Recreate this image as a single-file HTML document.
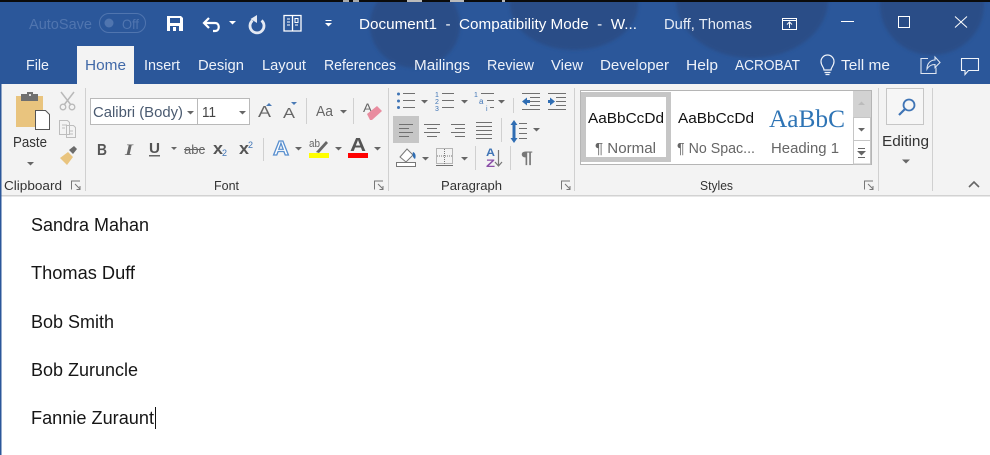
<!DOCTYPE html>
<html lang="en"><head><meta charset="utf-8"><title>Document1 - Word</title>
<style>
html,body{margin:0;padding:0;width:990px;height:455px;overflow:hidden;background:#fff}
svg{display:block}
text{font-family:"Liberation Sans",sans-serif}
.t{font-size:15px;fill:#fff}
.tab{font-size:15px;fill:#eef2f9}
.lab{font-size:13px;fill:#333}
.doc{font-size:18.500px;fill:#161616}
.ar{fill:#666}
.ln{stroke:#707070;stroke-width:1;fill:none}
.sep{stroke:#d0d0d0;stroke-width:1}
.lau{stroke:#777;stroke-width:1;fill:none}
.w{stroke:#fff;fill:none;stroke-width:1.2}
</style></head><body>
<svg width="990" height="455" viewBox="0 0 990 455" xmlns="http://www.w3.org/2000/svg">
<defs><filter id="b" x="-10%" y="-10%" width="120%" height="120%"><feGaussianBlur stdDeviation="1.500"/></filter></defs>
<rect width="990" height="455" fill="#fff"/>
<!-- title bar -->
<rect width="990" height="85" fill="#2b579a"/>
<g fill="#294d87" filter="url(#b)">
<ellipse cx="415" cy="25" rx="45" ry="43"/>
<ellipse cx="574" cy="5" rx="64" ry="45"/>
<ellipse cx="752" cy="0" rx="76" ry="58"/>
<ellipse cx="932" cy="5" rx="52" ry="50"/>
</g>
<rect width="990" height="2" fill="#0b0b0b"/>
<rect x="343" y="0" width="6" height="2" fill="#aaa"/><rect x="353" y="0" width="6" height="2" fill="#aaa"/>
<rect x="407" y="0" width="15" height="2" fill="#bbb"/><rect x="450" y="0" width="14" height="2" fill="#bbb"/><rect x="502" y="0" width="3" height="2" fill="#bbb"/>
<text x="29" y="29" class="t" style="fill:#5075af" textLength="63" lengthAdjust="spacingAndGlyphs">AutoSave</text>
<rect x="99.500" y="13.500" width="46" height="19" rx="9.500" fill="none" stroke="#5075af"/>
<circle cx="109" cy="23" r="4.500" fill="#5075af"/>
<text x="122" y="29" class="t" style="fill:#5075af;font-size:14px" textLength="17" lengthAdjust="spacingAndGlyphs">Off</text>
<!-- save -->
<path d="M167 16h14l2 2v13h-16z" fill="#fff"/><rect x="170" y="18" width="10" height="5" fill="#2b579a"/><rect x="170" y="26" width="9" height="5" fill="#2b579a"/><rect x="173" y="27" width="3" height="4" fill="#fff"/>
<!-- undo -->
<path d="M204 23h11c5 0 5 8 0 8h-2M209 18l-5 5 5 5" fill="none" stroke="#fff" stroke-width="2.200"/>
<path d="M229 21h7l-3.500 3.500z" fill="#fff"/>
<!-- redo -->
<path d="M252.500 20.500a7 7 0 1 0 9 0" fill="none" stroke="#e4e9f3" stroke-width="2.800"/><path d="M257 15v8l-6.500-4z" fill="#e4e9f3"/>
<!-- book -->
<path d="M284 15.500h17v15.500h-17zM292.500 16v15" fill="none" stroke="#fff" stroke-width="1.300"/>
<path d="M287 19h3M287 22h3M287 25h3M295 18.500h3v4h-3zM295 25h3" fill="none" stroke="#fff"/>
<path d="M325.500 20.500h6" stroke="#fff"/><path d="M325 23h7l-3.500 3.500z" fill="#fff"/>
<text x="359" y="29" class="t" textLength="278" lengthAdjust="spacingAndGlyphs" xml:space="preserve">Document1  -  Compatibility Mode  -  W...</text>
<text x="664" y="29" class="t" textLength="88" lengthAdjust="spacingAndGlyphs" style="fill:#e6ecf5">Duff, Thomas</text>
<rect x="782.500" y="18.500" width="14" height="11" class="w" style="stroke-width:1"/><path d="M782 20.500h15M789.500 28v-6M787 24.500l2.500-2.500 2.500 2.500" class="w" style="stroke-width:1"/>
<path d="M841 21.500h13" stroke="#fff"/>
<rect x="898.500" y="16.500" width="11" height="11" class="w" style="stroke-width:1"/>
<path d="M955 16.500l12 11M967 16.500l-12 11" class="w" style="stroke-width:1"/>
<!-- ribbon -->
<rect x="0" y="84" width="990" height="111" fill="#f3f3f3"/>
<rect x="0" y="195" width="990" height="1.500" fill="#d2d2d2"/>
<rect x="0" y="84" width="1.500" height="371" fill="#2b579a"/>
<!-- tabs -->
<rect x="77" y="46" width="57" height="39" fill="#f3f3f3"/>
<text x="26" y="70" class="tab" textLength="23" lengthAdjust="spacingAndGlyphs">File</text>
<text x="85" y="70" class="tab" style="fill:#4169a8" textLength="41" lengthAdjust="spacingAndGlyphs">Home</text>
<text x="144" y="70" class="tab" textLength="36" lengthAdjust="spacingAndGlyphs">Insert</text>
<text x="198" y="70" class="tab" textLength="46" lengthAdjust="spacingAndGlyphs">Design</text>
<text x="262" y="70" class="tab" textLength="44" lengthAdjust="spacingAndGlyphs">Layout</text>
<text x="324" y="70" class="tab" textLength="72" lengthAdjust="spacingAndGlyphs">References</text>
<text x="414" y="70" class="tab" textLength="56" lengthAdjust="spacingAndGlyphs">Mailings</text>
<text x="487" y="70" class="tab" textLength="47" lengthAdjust="spacingAndGlyphs">Review</text>
<text x="551" y="70" class="tab" textLength="32" lengthAdjust="spacingAndGlyphs">View</text>
<text x="600" y="70" class="tab" textLength="69" lengthAdjust="spacingAndGlyphs">Developer</text>
<text x="686" y="70" class="tab" textLength="32" lengthAdjust="spacingAndGlyphs">Help</text>
<text x="735" y="70" class="tab" textLength="65" lengthAdjust="spacingAndGlyphs">ACROBAT</text>
<path d="M824 70c0-3-3-4-3-8.500a6.500 6.500 0 0 1 13 0c0 4.500-3 5.500-3 8.500zM824.500 72.500h6M825.500 74.500h4" fill="none" stroke="#f0f4fa" stroke-width="1.200"/>
<text x="841" y="70" class="tab" textLength="49" lengthAdjust="spacingAndGlyphs">Tell me</text>
<path d="M928 58.500h-7v15h15v-6M927 69c0-6 4-9 8-9v-3l5 5.500-5 5v-3c-3 0-6 1-8 4.500z" fill="none" stroke="#dfe6f1" stroke-width="1.100"/>
<path d="M961.500 58.500h17v12h-10l-3.500 4v-4h-3.500z" fill="none" stroke="#f0f4fa" stroke-width="1.100"/>
<!-- clipboard -->
<rect x="16" y="96" width="27" height="31" fill="#e9c47e"/>
<rect x="21" y="94" width="17" height="7" fill="#6f6f6f"/><rect x="27" y="92" width="6" height="4" fill="#6f6f6f"/><rect x="29" y="94" width="2" height="2" fill="#ddd"/>
<path d="M35.500 110.500h10l4 4v15h-14z" fill="#fff" stroke="#555"/>
<path d="M61 92l10 13M74 92l-10 13" stroke="#b9b9b9" stroke-width="1.500"/><circle cx="63" cy="107" r="2.800" fill="none" stroke="#b9b9b9" stroke-width="1.300"/><circle cx="72" cy="107" r="2.800" fill="none" stroke="#b9b9b9" stroke-width="1.300"/>
<path d="M59.500 120.500h8l2 2v12h-10zM66.500 125.500h7l2 2v10h-9zM62 125h5M62 128h3M69 131h4M69 134h4" fill="#f3f3f3" stroke="#bdbdbd"/>
<path d="M60 158l8-6 5 5-6 8z" fill="#e9c47e"/><path d="M69 150l5-4 3 3-4 5z" fill="#6b6b6b"/>
<text x="13" y="147" style="font-size:15px;fill:#333" textLength="34" lengthAdjust="spacingAndGlyphs">Paste</text>
<path class="ar" d="M27 162h7l-3.500 3.500z"/>
<text x="4" y="190" class="lab" textLength="58" lengthAdjust="spacingAndGlyphs">Clipboard</text>
<path class="lau" d="M71.500 189.500v-8.500h8.500M75 184l5 5M80 186v3.500h-3.500"/>
<line class="sep" x1="85.500" y1="88" x2="85.500" y2="191"/>
<!-- font -->
<rect x="90.500" y="98.500" width="107" height="26" fill="#fff" stroke="#b9b9b9"/>
<rect x="197.500" y="98.500" width="52" height="26" fill="#fff" stroke="#b9b9b9"/>
<text x="93" y="117" style="font-size:15px;fill:#4a5a70" textLength="90" lengthAdjust="spacingAndGlyphs">Calibri (Body)</text>
<path class="ar" d="M187 111h7l-3.500 3.500z"/>
<text x="202" y="117" style="font-size:15px;fill:#444" textLength="14" lengthAdjust="spacingAndGlyphs">11</text>
<path class="ar" d="M239 111h7l-3.500 3.500z"/>
<text x="258" y="117" style="font-size:16px;fill:#666" textLength="13" lengthAdjust="spacingAndGlyphs">A</text>
<path d="M266 106h6l-3-3z" fill="#4a7ab5"/>
<text x="283" y="118" style="font-size:15px;fill:#666" textLength="12" lengthAdjust="spacingAndGlyphs">A</text>
<path d="M291 102h6l-3 3z" fill="#4a7ab5"/>
<line class="sep" x1="306.500" y1="98" x2="306.500" y2="124"/>
<text x="316" y="116" style="font-size:15px;fill:#666" textLength="17" lengthAdjust="spacingAndGlyphs">Aa</text>
<path class="ar" d="M340 110h7l-3.500 3.500z"/>
<line class="sep" x1="353.500" y1="98" x2="353.500" y2="124"/>
<text x="363" y="112" style="font-size:12px;fill:#666" textLength="9" lengthAdjust="spacingAndGlyphs">A</text>
<path d="M367 114l10-8 5 5-10 9h-2z" fill="#e98c9f"/>
<line class="sep" x1="388.500" y1="88" x2="388.500" y2="191"/>
<text x="97" y="155" style="font-size:16px;font-weight:bold;fill:#555" textLength="10" lengthAdjust="spacingAndGlyphs">B</text>
<text x="125" y="155" style="font-size:16px;font-weight:bold;font-style:italic;fill:#666;font-family:'Liberation Serif',serif" textLength="8" lengthAdjust="spacingAndGlyphs">I</text>
<text x="149" y="153" style="font-size:15px;font-weight:bold;fill:#555" textLength="11" lengthAdjust="spacingAndGlyphs">U</text>
<rect x="149" y="155" width="11" height="1.500" fill="#666"/>
<path class="ar" d="M171 147h6l-3 3z"/>
<text x="184" y="154" style="font-size:13px;fill:#666" textLength="21" lengthAdjust="spacingAndGlyphs">abc</text>
<rect x="184" y="149" width="21" height="1" fill="#666"/>
<text x="213" y="154" style="font-size:17px;font-weight:bold;fill:#555" textLength="10" lengthAdjust="spacingAndGlyphs">x</text>
<text x="222" y="156" style="font-size:9px;fill:#3f74b5">2</text>
<text x="239" y="154" style="font-size:17px;font-weight:bold;fill:#555" textLength="10" lengthAdjust="spacingAndGlyphs">x</text>
<text x="248" y="148" style="font-size:9px;fill:#3f74b5">2</text>
<line class="sep" x1="263.500" y1="138" x2="263.500" y2="161"/>
<text x="273" y="155" style="font-size:20px;font-weight:bold;fill:#fff;stroke:#5a90cf;stroke-width:1.200" textLength="16" lengthAdjust="spacingAndGlyphs">A</text>
<path class="ar" d="M295 147h7l-3.500 3.500z"/>
<text x="309" y="147" style="font-size:11px;fill:#666" textLength="11" lengthAdjust="spacingAndGlyphs">ab</text>
<path d="M316 152l10-11 2 2-9 10z" fill="#666"/>
<rect x="309" y="153" width="20" height="5" fill="#ffff00"/>
<path class="ar" d="M335 147h7l-3.500 3.500z"/>
<text x="350" y="151" style="font-size:18px;fill:#555;font-weight:bold" textLength="16" lengthAdjust="spacingAndGlyphs">A</text>
<rect x="348" y="153" width="20" height="5" fill="#ff0000"/>
<path class="ar" d="M374 147h7l-3.500 3.500z"/>
<text x="214" y="190" class="lab" textLength="25" lengthAdjust="spacingAndGlyphs">Font</text>
<path class="lau" d="M374.500 189.500v-8.500h8.500M378 184l5 5M383 186v3.500h-3.500"/>
<!-- paragraph -->
<g fill="#3f74b5"><circle cx="398.500" cy="94" r="1.500"/><circle cx="398.500" cy="101" r="1.500"/><circle cx="398.500" cy="107.500" r="1.500"/></g>
<path class="ln" d="M403 93.500h12M403 100.500h12M403 107.500h12"/>
<path class="ar" d="M421 100h7l-3.500 3.500z"/>
<text x="435" y="97" style="font-size:7px;fill:#3f74b5">1</text><text x="435" y="104" style="font-size:7px;fill:#3f74b5">2</text><text x="435" y="111" style="font-size:7px;fill:#3f74b5">3</text>
<path class="ln" d="M442 93.500h12M442 100.500h12M442 107.500h12"/>
<path class="ar" d="M461 100h7l-3.500 3.500z"/>
<text x="474" y="97" style="font-size:7px;fill:#3f74b5">1</text><text x="479" y="104" style="font-size:8px;fill:#3f74b5">a</text><text x="486" y="111" style="font-size:7px;fill:#3f74b5">i</text>
<path class="ln" d="M481 93.500h13M487 100.500h7M490 107.500h4"/>
<path class="ar" d="M498 100h7l-3.500 3.500z"/>
<line class="sep" x1="513.500" y1="98" x2="513.500" y2="113"/>
<path class="ln" d="M522 93.500h18M530 97.500h10M530 101.500h10M530 105.500h10M522 109.500h18"/>
<path d="M522 101.500l5-4v8z" fill="#2f6db3"/><rect x="526" y="100" width="4" height="3" fill="#2f6db3"/>
<path class="ln" d="M548 93.500h18M556 97.500h10M556 101.500h10M556 105.500h10M548 109.500h18"/>
<path d="M555 101.500l-5-4v8z" fill="#2f6db3"/><rect x="548" y="100" width="3" height="3" fill="#2f6db3"/>
<line class="sep" x1="574.500" y1="88" x2="574.500" y2="191"/>
<rect x="393" y="116" width="26" height="27" fill="#c6c6c6"/>
<path class="ln" d="M399 124.500h14M399 128.500h10M399 132.500h14M399 136.500h10"/>
<path class="ln" d="M424 124.500h16M427 128.500h10M424 132.500h16M427 136.500h10"/>
<path class="ln" d="M451 124.500h14M455 128.500h10M451 132.500h14M455 136.500h10"/>
<path class="ln" d="M476 122.500h16M476 126.500h16M476 130.500h16M476 134.500h16M476 138.500h16"/>
<line class="sep" x1="501.500" y1="118" x2="501.500" y2="142"/>
<path d="M514 120l3.500 5h-2v13h2l-3.500 5-3.500-5h2v-13h-2z" fill="#2f6db3"/>
<path class="ln" d="M519 123.500h8M519 128.500h8M519 133.500h8M519 138.500h8"/>
<path class="ar" d="M533 128h7l-3.500 3.500z"/>
<path d="M400 157l7-8 6 6-7 7z" fill="#fff" stroke="#777"/><path d="M413 152c3 1 3 5 2 7-2-1-3-4-2-7z" fill="#2f6db3"/>
<rect x="396.500" y="162.500" width="19" height="4" fill="#fff" stroke="#777"/>
<path class="ar" d="M422 157h7l-3.500 3.500z"/>
<path d="M436.500 148.500h16v15h-16zM444.500 149v15M437 156h15" fill="none" stroke="#777" stroke-dasharray="1 1"/><path class="ln" d="M436 165.500h17"/>
<path class="ar" d="M461 157h7l-3.500 3.500z"/>
<line class="sep" x1="475.500" y1="146" x2="475.500" y2="170"/>
<text x="486" y="156" style="font-size:11px;font-weight:bold;fill:#3f74b5" textLength="9" lengthAdjust="spacingAndGlyphs">A</text>
<text x="486" y="167" style="font-size:11px;font-weight:bold;fill:#8b4fa8" textLength="9" lengthAdjust="spacingAndGlyphs">Z</text>
<path d="M498.500 150v16M495 162l3.500 4 3.500-4" fill="none" stroke="#777" stroke-width="1.200"/>
<line class="sep" x1="510.500" y1="146" x2="510.500" y2="170"/>
<text x="521" y="163" style="font-size:17px;font-weight:bold;fill:#777" textLength="12" lengthAdjust="spacingAndGlyphs">¶</text>
<text x="441" y="190" class="lab" textLength="61" lengthAdjust="spacingAndGlyphs">Paragraph</text>
<path class="lau" d="M561.500 189.500v-8.500h8.500M565 184l5 5M570 186v3.500h-3.500"/>
<!-- styles -->
<rect x="580.500" y="90.500" width="291" height="74" fill="#fff" stroke="#b5b5b5"/>
<rect x="583.500" y="94.500" width="85" height="65" fill="#fff" stroke="#c6c6c6" stroke-width="5"/>
<text x="588" y="123" style="font-size:15px;fill:#111" textLength="76" lengthAdjust="spacingAndGlyphs">AaBbCcDd</text>
<text x="595" y="153" style="font-size:15px;fill:#666" textLength="61" lengthAdjust="spacingAndGlyphs">¶ Normal</text>
<text x="678" y="123" style="font-size:15px;fill:#111" textLength="76" lengthAdjust="spacingAndGlyphs">AaBbCcDd</text>
<text x="677" y="153" style="font-size:15px;fill:#666" textLength="78" lengthAdjust="spacingAndGlyphs">¶ No Spac...</text>
<text x="769" y="127" style="font-size:25px;fill:#2e74b5;font-family:'Liberation Serif',serif" textLength="76" lengthAdjust="spacingAndGlyphs">AaBbC</text>
<text x="771" y="153" style="font-size:15px;fill:#666" textLength="68" lengthAdjust="spacingAndGlyphs">Heading 1</text>
<rect x="853" y="91" width="18" height="26" fill="#d2d2d2"/>
<rect x="853.500" y="117.500" width="17" height="23" fill="#fff" stroke="#c6c6c6"/>
<rect x="853.500" y="140.500" width="17" height="23.500" fill="#fff" stroke="#c6c6c6"/>
<path d="M858 105h7l-3.500-3.500z" fill="#bbb"/>
<path class="ar" d="M858 128h7l-3.500 3.500z"/>
<path d="M858 148.500h7" stroke="#666"/><path class="ar" d="M857 151h9l-4.500 4.500z"/><path d="M858 157.500h7" stroke="#666"/>
<text x="700" y="190" class="lab" textLength="33" lengthAdjust="spacingAndGlyphs">Styles</text>
<path class="lau" d="M864.500 189.500v-8.500h8.500M868 184l5 5M873 186v3.500h-3.500"/>
<line class="sep" x1="878.500" y1="88" x2="878.500" y2="191"/>
<!-- editing -->
<rect x="886.500" y="88.500" width="37" height="36" fill="#f6f6f6" stroke="#c6c6c6"/>
<circle cx="909" cy="105" r="5.500" fill="none" stroke="#3f74b5" stroke-width="1.800"/>
<path d="M905 109l-6 6" stroke="#3f74b5" stroke-width="2.200"/>
<text x="882" y="146" style="font-size:15px;fill:#333" textLength="47" lengthAdjust="spacingAndGlyphs">Editing</text>
<path class="ar" d="M902 159.500h8l-4 4z"/>
<line class="sep" x1="932.500" y1="88" x2="932.500" y2="191"/>
<path d="M969 187l5-5 5 5" fill="none" stroke="#666" stroke-width="1.600"/>
<!-- document -->
<text x="31" y="231" class="doc" textLength="118" lengthAdjust="spacingAndGlyphs">Sandra Mahan</text>
<text x="31" y="279" class="doc" textLength="104" lengthAdjust="spacingAndGlyphs">Thomas Duff</text>
<text x="31" y="328" class="doc" textLength="83" lengthAdjust="spacingAndGlyphs">Bob Smith</text>
<text x="31" y="376" class="doc" textLength="107" lengthAdjust="spacingAndGlyphs">Bob Zuruncle</text>
<text x="31" y="424" class="doc" textLength="123" lengthAdjust="spacingAndGlyphs">Fannie Zuraunt</text>
<rect x="155" y="407" width="1" height="22" fill="#111"/>
</svg>
</body></html>
